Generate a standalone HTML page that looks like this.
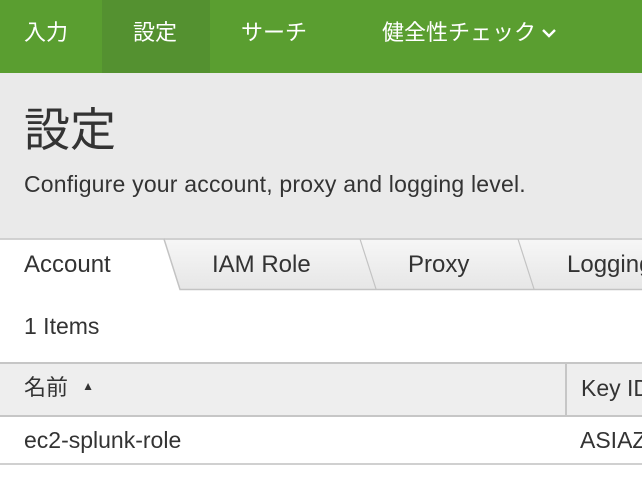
<!DOCTYPE html>
<html><head><meta charset="utf-8"><style>
body{margin:0;width:642px;height:504px;overflow:hidden;background:#fff;font-family:"Liberation Sans","Noto Sans CJK JP",sans-serif;color:#333;position:relative}
.nav{position:absolute;left:0;top:0;width:642px;height:73px;background:#5a9e30}
.nav div{position:absolute;top:0;height:73px;line-height:66px;color:#fff;font-size:22px;white-space:nowrap}
.hdr{position:absolute;left:0;top:73px;width:642px;height:166px;background:#eaeaea}
.abs{position:absolute;white-space:nowrap;line-height:1}
</style></head><body>
<div class="nav">
<div style="left:102px;width:108px;background:#549130"></div>
<div style="left:24px">入力</div>
<div style="left:133px">設定</div>
<div style="left:241px">サーチ</div>
<div style="left:382px">健全性チェック<svg width="18" height="12" viewBox="0 0 18 12" style="margin-left:4px;vertical-align:1px"><path d="M3 3 L9 9 L15 3" stroke="#fff" stroke-width="2.4" fill="none"/></svg></div>
</div>
<div class="hdr">
<div class="abs" style="left:24px;top:34px;font-size:46px;color:#333">設定</div>
<div class="abs" style="left:24px;top:100px;font-size:23px;color:#333;letter-spacing:0.2px">Configure your account, proxy and logging level.</div>
</div>
<svg class="abs" style="left:0;top:238px" width="642" height="54">
<defs><linearGradient id="g" x1="0" y1="0" x2="0" y2="1"><stop offset="0" stop-color="#f7f7f7"/><stop offset="1" stop-color="#e6e6e6"/></linearGradient></defs>
<rect x="0" y="0" width="642" height="52" fill="url(#g)"/>
<path d="M0 1 H164 L180 52 H0 Z" fill="#fff"/>
<path d="M0 1 H164 L180 51.5 H642" stroke="#c3c3c3" stroke-width="1.5" fill="none"/>
<path d="M164 1 H642" stroke="#c3c3c3" stroke-width="1.5"/>
<path d="M360 1 L376 51" stroke="#c3c3c3" stroke-width="1.2"/>
<path d="M518 1 L534 51" stroke="#c3c3c3" stroke-width="1.2"/>
</svg>
<div class="abs" style="left:24px;top:253px;font-size:24px;color:#333">Account</div>
<div class="abs" style="left:212px;top:253px;font-size:24px;color:#333">IAM Role</div>
<div class="abs" style="left:408px;top:253px;font-size:24px;color:#333">Proxy</div>
<div class="abs" style="left:567px;top:253px;font-size:24px;color:#333">Logging</div>
<div class="abs" style="left:24px;top:315px;font-size:23px">1 Items</div>
<div class="abs" style="left:0;top:362px;width:642px;height:51px;background:#eeeeee;border-top:2px solid #c6c6c6;border-bottom:2px solid #c6c6c6"></div>
<div class="abs" style="left:565px;top:364px;width:2px;height:51px;background:#c6c6c6"></div>
<div class="abs" style="left:24px;top:377px;font-size:22px">名前 <span style="font-size:12px;vertical-align:5px;margin-left:8px">▲</span></div>
<div class="abs" style="left:581px;top:377px;font-size:23px">Key ID</div>
<div class="abs" style="left:24px;top:429px;font-size:23px">ec2-splunk-role</div>
<div class="abs" style="left:580px;top:429px;font-size:23px">ASIAZ</div>
<div class="abs" style="left:0;top:463px;width:642px;height:2px;background:#d0d0d0"></div>
</body></html>
